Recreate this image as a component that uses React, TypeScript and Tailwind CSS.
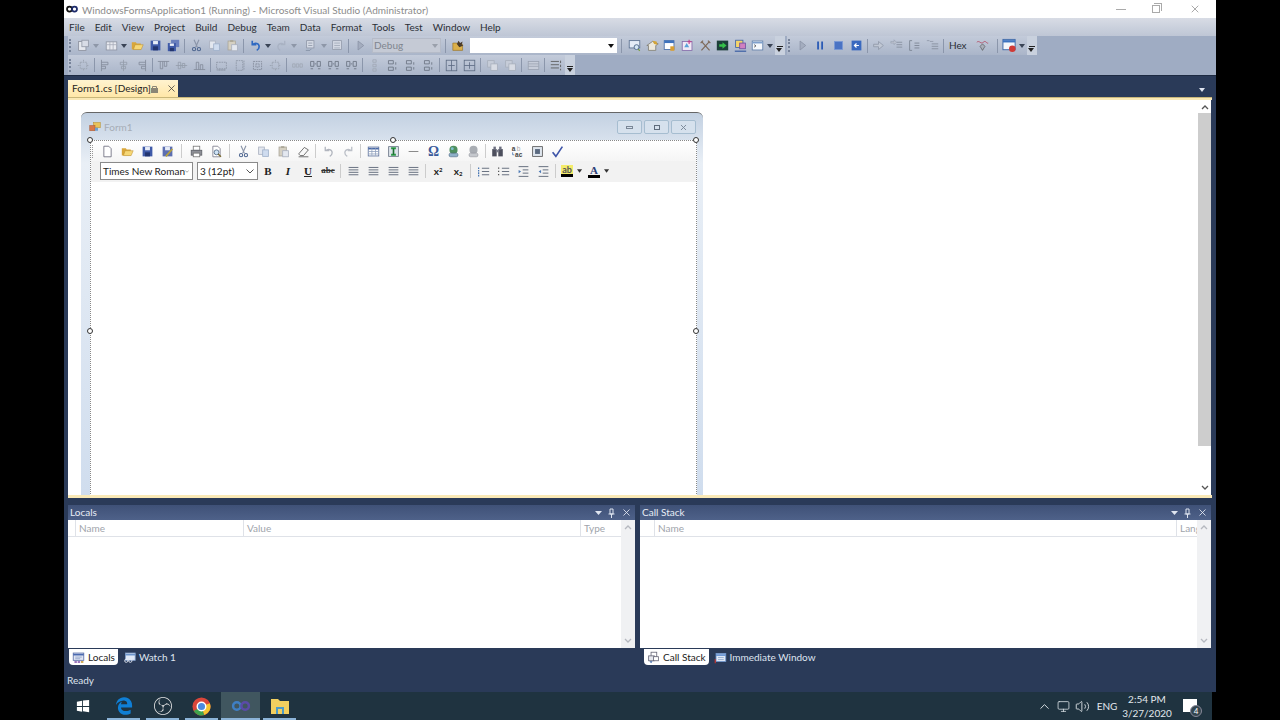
import type { ReactNode } from "react";
import { ChevronUp, Monitor, Volume2, X } from "lucide-react";
import { FaEdgeLegacy } from "react-icons/fa";
import { SiObsstudio } from "react-icons/si";

const lines = (ys: number[], x1: number, x2: number, c = "#4a5568") =>
  ys.map((y) => <path key={y} d={`M${x1} ${y}H${x2}`} stroke={c} />);

const icons: Record<string, ReactNode> = {
  page: <path d="M3.5 1.5h6l3 3v10h-9z" fill="#fff" stroke="#667" />,
  newproj: (
    <>
      <rect x="2" y="3" width="9" height="11" fill="#e6e8ee" stroke="#8a8f9c" />
      <rect x="6" y="1.5" width="8" height="8" fill="#d8dce6" stroke="#9298a6" />
    </>
  ),
  additem: (
    <>
      <rect x="1.5" y="3.5" width="13" height="10" fill="#e8eaf0" stroke="#8d93a1" />
      <path d="M1.5 7h13M6 3.5v10M10 3.5v10" stroke="#a8adba" />
    </>
  ),
  folder: (
    <>
      <path d="M1 13V4h5l1 1.500h5V13z" fill="#d9a63a" />
      <path d="M3 13l2-6h10l-2.500 6z" fill="#f6d776" stroke="#b98a28" strokeWidth=".6" />
    </>
  ),
  folderRun: (
    <>
      <path d="M1 14V5h5l1 1.500h6V14z" fill="#dcb04a" stroke="#8d6a20" strokeWidth=".7" />
      <path d="M8 2l2 3 3-2-1 4 2 1-5 2-3-4z" fill="#4a3b2a" />
    </>
  ),
  save: (
    <>
      <path d="M2 2h12v12H2z" fill="#3f5aa8" />
      <rect x="5" y="2.500" width="6" height="4" fill="#e8edf8" />
      <rect x="5" y="9" width="6" height="5" fill="#23356f" />
    </>
  ),
  saveAll: (
    <>
      <path d="M5 1h10v9H5z" fill="#6a7fbd" />
      <path d="M1 5h10v10H1z" fill="#3f5aa8" />
      <rect x="3.500" y="5.500" width="5" height="3" fill="#e8edf8" />
      <rect x="3.500" y="11" width="5" height="4" fill="#23356f" />
    </>
  ),
  saveEdit: (
    <>
      <path d="M2 2h12v12H2z" fill="#5d6fb1" />
      <rect x="5" y="2.500" width="6" height="4" fill="#e8edf8" />
      <path d="M6 14L14 5" stroke="#b8a33a" strokeWidth="2" />
    </>
  ),
  cut: (
    <>
      <path d="M5 1l4 9M11 1L7 10" stroke="#8a94a8" strokeWidth="1.400" />
      <circle cx="5" cy="12.500" r="2" fill="none" stroke="#4e6690" strokeWidth="1.300" />
      <circle cx="11" cy="12.500" r="2" fill="none" stroke="#4e6690" strokeWidth="1.300" />
    </>
  ),
  copy: (
    <>
      <rect x="2" y="2.500" width="7" height="9" fill="#e3e7ef" stroke="#aab1c0" />
      <rect x="7" y="6" width="7" height="8" fill="#cfdcef" stroke="#9fb0ca" />
    </>
  ),
  paste: (
    <>
      <rect x="2.500" y="2.500" width="9" height="11" fill="#d5d0c2" stroke="#aaa69a" />
      <rect x="7" y="7" width="7" height="7.500" fill="#e4e8f0" stroke="#a9b0bf" />
      <rect x="5" y="1.500" width="4" height="2" fill="#a9a595" />
    </>
  ),
  eraser: <path d="M2 11l7-8 5 3-6 7H4zM2 14.500h12" fill="#fafafa" stroke="#555" />,
  undo: <path d="M4 2v5h5M4.500 7c3-3 8-1.500 8 2.500 0 2-1 3.500-3 4.500" fill="none" stroke="#2f69c2" strokeWidth="2" />,
  redo: <path d="M12 2v5H7M11.500 7c-3-3-8-1.500-8 2.500 0 2 1 3.500 3 4.500" fill="none" stroke="#a9b2c3" strokeWidth="1.600" />,
  undoG: <path d="M4 2v5h5M4.500 7c3-3 8-1.500 8 2.500 0 2-1 3.500-3 4.500" fill="none" stroke="#b2b6bf" strokeWidth="1.600" />,
  redoG: <path d="M12 2v5H7M11.500 7c-3-3-8-1.500-8 2.500 0 2 1 3.500 3 4.500" fill="none" stroke="#bcc0c8" strokeWidth="1.600" />,
  nav: (
    <>
      <rect x="2" y="2" width="9" height="9" fill="#d5dae5" stroke="#8f97a7" />
      <path d="M4 5h5M4 8h5" stroke="#8f97a7" />
      <path d="M1 14h5l2-2" stroke="#7e8b9f" fill="none" />
    </>
  ),
  nav2: (
    <>
      <rect x="2" y="2" width="11" height="11" fill="#d3d8e3" stroke="#939bab" />
      <path d="M4 5h7M4 8h7M4 11h7" stroke="#9fa7b6" />
    </>
  ),
  play: <path d="M5 2.500l7 5.500-7 5.500z" fill="#a4adbf" stroke="#8a93a6" />,
  find: (
    <>
      <rect x="1.500" y="2" width="13" height="9" fill="#e4ecf6" stroke="#556b8c" />
      <circle cx="10.500" cy="10" r="3" fill="#d4e6f4" stroke="#546e8f" strokeWidth="1.200" />
      <path d="M12.500 12.500l2 2" stroke="#7a9e3a" strokeWidth="1.500" />
    </>
  ),
  props: (
    <>
      <path d="M1 8l7-5 7 3-3 2v6H3V8z" fill="#ece8dc" stroke="#7d7a70" />
      <path d="M8 2l5 1 1 4-4-1z" fill="#d3a437" />
    </>
  ),
  win: (
    <>
      <rect x="1.500" y="2" width="12" height="11" fill="#fff" stroke="#3f68a6" />
      <rect x="1.500" y="2" width="12" height="3" fill="#3f73bd" />
      <rect x="9" y="9" width="5" height="5.500" fill="#d99e32" />
    </>
  ),
  win2: (
    <>
      <rect x="1.500" y="3" width="12" height="11" fill="#f1e9f5" stroke="#8368a8" />
      <path d="M4 10l3-5 3 5z" fill="#5aa2d8" />
      <path d="M10 1v5M8 3.500h5" stroke="#c23e8a" strokeWidth="1.300" />
    </>
  ),
  locals: (
    <>
      <rect x="1.500" y="2.500" width="13" height="9" fill="#dfe4f2" stroke="#5a6fa8" />
      <path d="M1.500 4.500h13" stroke="#4a6ab0" strokeWidth="2" />
      <path d="M3 13.500h3M7 13.500h3" stroke="#7b4aa8" strokeWidth="2" />
      <path d="M11 13.500h3" stroke="#c79a35" strokeWidth="2" />
      <path d="M4 7.500h8M4 9.500h6" stroke="#8da0c8" />
    </>
  ),
  watch: (
    <>
      <rect x="3" y="2.500" width="12" height="9" fill="#dfe8f6" stroke="#7f9cc8" />
      <path d="M3 4.500h12" stroke="#6c94cc" strokeWidth="2" />
      <circle cx="4" cy="12" r="2" fill="none" stroke="#e8edf6" />
      <circle cx="9" cy="12" r="2" fill="none" stroke="#e8edf6" />
    </>
  ),
  stackIcon: (
    <>
      <rect x="5" y="1.500" width="7" height="6" fill="#fff" stroke="#667" />
      <rect x="2" y="6" width="7" height="6" fill="#e6e8ee" stroke="#667" />
      <rect x="8" y="7" width="6" height="5" fill="#fff" stroke="#667" />
      <path d="M5 15l2-2.500H3z" fill="#3f68a6" />
    </>
  ),
  immediate: (
    <>
      <rect x="2.500" y="3" width="12" height="10" fill="#dfe8f6" stroke="#6c94cc" />
      <path d="M2.500 5h12" stroke="#5f8ed0" strokeWidth="2" />
      <path d="M5 8h7M5 10.500h7" stroke="#8da8cf" />
      <path d="M1.500 10v5" stroke="#d9342b" strokeWidth="1.300" />
    </>
  ),
  tools: <path d="M3 14L13 3M3 3l10 11M11 2l3 3M2 5l3-3" stroke="#7e6a5a" strokeWidth="1.500" fill="none" />,
  greenArrow: (
    <>
      <rect x="1" y="2" width="14" height="12" fill="#1c3f3a" />
      <path d="M4 6.500h4V4l5 4-5 4V9.500H4z" fill="#35c24a" />
    </>
  ),
  colors: (
    <>
      <rect x="2" y="1.500" width="9" height="9" fill="#f4d46a" stroke="#3a62a8" />
      <rect x="7" y="5" width="7" height="7" fill="#d080c0" stroke="#6d4ea0" />
      <path d="M1 15h14" stroke="#3358a0" strokeWidth="1.400" />
    </>
  ),
  formIcon: (
    <>
      <rect x="6" y="2" width="9" height="7" fill="#e8c25a" stroke="#b89030" strokeWidth=".7" />
      <rect x="1" y="6" width="7" height="7" fill="#d9784a" stroke="#a85a35" strokeWidth=".7" />
      <rect x="8" y="9" width="4" height="4" fill="#6d9ed0" />
    </>
  ),
  console: (
    <>
      <rect x="1.500" y="2.500" width="13" height="11" fill="#f5f8fc" stroke="#5d7da8" />
      <path d="M1.500 4.500h13" stroke="#7fa0cc" strokeWidth="2" />
      <path d="M4 7l2 1.500-2 1.500" stroke="#333" fill="none" />
    </>
  ),
  pause: <path d="M5 3v10M10 3v10" stroke="#2a5ab5" strokeWidth="2.200" />,
  stop: <rect x="3" y="3" width="10" height="10" fill="#4a73c4" stroke="#7b9ad6" />,
  restart: (
    <>
      <rect x="2" y="2" width="12" height="12" fill="#3a69bf" />
      <path d="M11 8H6M8 5.500L5.500 8 8 10.500" stroke="#fff" strokeWidth="1.500" fill="none" />
    </>
  ),
  next: <path d="M2 6.500h6V3l6 5-6 5V9.500H2z" fill="#c0c7d4" stroke="#8f97a7" />,
  stepIn: (
    <>
      <path d="M8 4h7M8 7h7M8 10h7" stroke="#838b9a" />
      <path d="M1 3h4V1l3 3-3 3V5H1z" fill="#bcc3d0" stroke="#8f97a7" strokeWidth=".6" />
    </>
  ),
  stepBr: <path d="M5 2H2v12h3M8 5h6M8 8h6M8 11h6" stroke="#78808f" fill="none" />,
  stepOut: (
    <>
      <path d="M7 6h8M7 9h8M7 12h8" stroke="#838b9a" />
      <path d="M1 2h3l1 1H9" stroke="#8f97a7" fill="none" />
    </>
  ),
  thread: (
    <>
      <path d="M1 4c3-3 5 3 8 0s4 2 6 1" stroke="#b3425c" fill="none" />
      <path d="M5 9l3-3 3 3-3 5z" fill="#a9afba" stroke="#444" strokeWidth=".7" />
    </>
  ),
  breakW: (
    <>
      <rect x="1" y="1.500" width="13" height="11" fill="#f4f7fb" stroke="#3d68a8" />
      <path d="M1 3.500h13" stroke="#3d73c0" strokeWidth="2.500" />
      <circle cx="11" cy="11.500" r="3.500" fill="#d03a36" />
    </>
  ),
  alignL: <path d="M3 1v14M3 4h8v3H3M3 9h5v3H3" stroke="#828a9a" fill="none" />,
  alignC: <path d="M8 1v14M4 4h8v3H4zM5.500 9h5v3h-5z" stroke="#949caa" fill="none" />,
  alignR: <path d="M13 1v14M13 4H5v3h8M13 9H8v3h5" stroke="#828a9a" fill="none" />,
  alignT: <path d="M1 3h14M4 3v9h3V3M9 3v6h3V3" stroke="#828a9a" fill="none" />,
  alignM: <path d="M1 8h14M4 4h3v8H4zM9 5.500h3v5H9z" stroke="#949caa" fill="none" />,
  alignB: <path d="M1 13h14M4 13V4h3v9M9 13V7h3v6" stroke="#828a9a" fill="none" />,
  sizeW: <path d="M2 4h12v8H2zM2 13.500h12M4 13.500h8" stroke="#8a92a2" strokeDasharray="2 1" fill="none" />,
  sizeH: <path d="M4 2h8v12H4zM13.500 2v12" stroke="#8a92a2" strokeDasharray="2 1" fill="none" />,
  sizeB: <path d="M3 3h10v10H3zM6 6h4v4H6z" stroke="#808898" strokeDasharray="2 1" fill="none" />,
  grid: <path d="M4 4h8v8H4zM1 8h3M12 8h3M8 1v3M8 12v3" stroke="#98a0ae" strokeDasharray="2 1" fill="none" />,
  hsp1: <path d="M2 6h3v4H2zM6.500 6h3v4h-3zM11 6h3v4h-3z" stroke="#a0a8b5" fill="none" />,
  hsp2: <path d="M2 3h4v6H2zM10 3h4v6h-4zM2 12h3M11 12h3M7 6h2" stroke="#68707f" fill="none" />,
  vsp1: <path d="M6 1h4v3H6zM6 6.500h4v3H6zM6 12h4v3H6z" stroke="#a0a8b5" fill="none" />,
  vsp2: <path d="M3 2h6v4H3zM3 10h6v4H3zM12 4v3M12 10v3" stroke="#68707f" fill="none" />,
  centerH: (
    <>
      <rect x="1.500" y="1.500" width="13" height="13" fill="none" stroke="#5c6a82" />
      <path d="M8 1.500v13M4 8h8" stroke="#5c6a82" />
    </>
  ),
  centerV: (
    <>
      <rect x="1.500" y="1.500" width="13" height="13" fill="none" stroke="#5c6a82" />
      <path d="M1.500 8h13M8 4v8" stroke="#5c6a82" />
    </>
  ),
  front: (
    <>
      <rect x="2" y="2" width="8" height="8" fill="#c6ccd8" stroke="#a7afbc" />
      <rect x="6" y="6" width="8" height="8" fill="#d8dce4" stroke="#a7afbc" />
    </>
  ),
  tabOrder: (
    <>
      <rect x="1.500" y="3" width="13" height="10" fill="#c7cdd9" stroke="#9aa2b1" />
      <path d="M1.500 6h13M1.500 9h13" stroke="#9aa2b1" />
    </>
  ),
  layout: (
    <>
      {lines([3, 7, 11], 1, 11, "#555")}
      <path d="M13 2v3M13 7v3M13 12v2" stroke="#555" />
    </>
  ),
  print: (
    <>
      <rect x="4" y="1.500" width="8" height="5" fill="#fff" stroke="#777" />
      <rect x="1.500" y="6.500" width="13" height="6" fill="#8e9097" stroke="#5d5f66" />
      <rect x="4" y="10" width="8" height="4.500" fill="#fff" stroke="#777" />
    </>
  ),
  preview: (
    <>
      <path d="M3.500 1.500h6l3 3v10h-9z" fill="#fff" stroke="#778" />
      <circle cx="8" cy="9" r="3" fill="#cfe3f5" stroke="#47617f" />
      <path d="M10 11l3.500 3.500" stroke="#7c6a2e" strokeWidth="1.600" />
    </>
  ),
  table: (
    <>
      <rect x="1.500" y="2.500" width="13" height="11" fill="#fff" stroke="#5a6f9a" />
      <path d="M1.500 4.500h13" stroke="#4a6aa8" strokeWidth="2" />
      <path d="M1.500 8h13M1.500 11h13M6 4v9M10.500 4v9" stroke="#93a2bf" />
    </>
  ),
  imgGreen: (
    <>
      <rect x="2" y="2" width="12" height="12" fill="#dce3ea" stroke="#6b7686" />
      <path d="M5 4h6M5 12h6" stroke="#2f9e4a" strokeWidth="2.500" />
      <path d="M8 4v8" stroke="#1d6f33" strokeWidth="2" />
    </>
  ),
  hr: <path d="M2 8h12" stroke="#8b8b8b" strokeWidth="1.300" />,
  omega: (
    <text x="8" y="14" textAnchor="middle" fontSize="17" fontWeight="700" fill="#3a5a9a" fontFamily="Liberation Serif">
      Ω
    </text>
  ),
  replace: (
    <>
      <text x="1" y="7" fontSize="8" fontWeight="700" fill="#444" fontFamily="Liberation Sans">a</text>
      <text x="7" y="7" fontSize="8" fill="#aaa" fontFamily="Liberation Sans">b</text>
      <text x="5" y="15" fontSize="8" fontWeight="700" fill="#444" fontFamily="Liberation Sans">ac</text>
      <path d="M2 9v3h2" stroke="#4a78b5" fill="none" />
    </>
  ),
  globe: (
    <>
      <circle cx="8" cy="6" r="5" fill="#4f8f5e" />
      <circle cx="6.500" cy="4.500" r="1.800" fill="#7ebfd0" />
      <rect x="2.500" y="10" width="11" height="4.500" rx="2" fill="#8fb0c8" stroke="#46627e" strokeWidth=".7" />
    </>
  ),
  globeG: (
    <>
      <circle cx="8" cy="6" r="5" fill="#a9adb3" />
      <rect x="2.500" y="10" width="11" height="4.500" rx="2" fill="#c5c8cd" stroke="#8f9298" strokeWidth=".7" />
    </>
  ),
  binoc: (
    <>
      <rect x="1.500" y="5" width="5.500" height="9" fill="#4d4f5d" />
      <rect x="9" y="5" width="5.500" height="9" fill="#4d4f5d" />
      <rect x="3" y="2" width="3" height="4" fill="#6c6f80" />
      <rect x="10" y="2" width="3" height="4" fill="#6c6f80" />
      <rect x="6" y="6" width="4" height="3" fill="#7a7c8a" />
    </>
  ),
  frame: (
    <>
      <rect x="2" y="2" width="12" height="12" fill="#dfe6ee" stroke="#555" />
      <rect x="5" y="5" width="6" height="6" fill="#5b6a80" />
    </>
  ),
  spell: <path d="M2 9l4 5 8-12" stroke="#3e54a8" strokeWidth="2" fill="none" />,
  alL: <>{lines([3, 6, 9, 12], 2, 14)}</>,
  alOut: (
    <>
      {lines([4, 8, 12], 6, 15)}
      <path d="M2 3v11" stroke="#4a78b5" strokeWidth="1.500" strokeDasharray="2 1" />
    </>
  ),
  alBul: (
    <>
      {lines([4, 8, 12], 6, 15)}
      <path d="M2 3v1.500M2 7v1.500M2 11v1.500" stroke="#555" strokeWidth="1.500" />
    </>
  ),
  indent: (
    <>
      {lines([2, 14], 2, 14)}
      {lines([6, 10], 7, 14)}
      <path d="M2 6l3 2-3 2z" fill="#4a78b5" />
    </>
  ),
  outdent: (
    <>
      {lines([2, 14], 2, 14)}
      {lines([6, 10], 7, 14)}
      <path d="M5 6L2 8l3 2z" fill="#4a78b5" />
    </>
  ),
  win10: <path d="M1 3l6-1v6H1zM8 1.800L15 1v7H8zM1 9h6v5.500l-6-1zM8 9h7v6l-7-.9z" fill="#fff" />,
};

function Icon({ name, size = 14 }: { name: string; size?: number }) {
  return (
    <svg width={size} height={size} viewBox="0 0 16 16">
      {icons[name]}
    </svg>
  );
}

const Caret = ({ color = "#3a4456" }: { color?: string }) => (
  <svg width="7" height="4" viewBox="0 0 7 4">
    <path d="M0 0h6L3 4z" fill={color} />
  </svg>
);

function Grip() {
  return <div className="w-[5px] h-[13px] ml-[1px] border-l-2 border-dotted border-[#77839a]" />;
}

function Sep({ w = 5, color = "bg-[#8b96ab]" }: { w?: number; color?: string }) {
  return (
    <div className="flex justify-center shrink-0" style={{ width: w }}>
      <div className={`w-px h-[14px] ${color}`} />
    </div>
  );
}

// a toolbar item: icon name, "|" separator (with optional width), "v" dropdown arrow
function Items({ list, cell, size, sepColor }: { list: string[]; cell: number; size: number; sepColor?: string }) {
  return (
    <>
      {list.map((it, i) => {
        if (it.startsWith("|")) return <Sep key={i} w={Number(it.slice(1) || 5)} color={sepColor} />;
        if (it === "v")
          return (
            <div key={i} className="w-[8px] flex justify-center shrink-0">
              <Caret />
            </div>
          );
        if (it === "vg")
          return (
            <div key={i} className="w-[8px] flex justify-center shrink-0">
              <Caret color="#8e97a8" />
            </div>
          );
        if (it.startsWith("_"))
          return <div key={i} className="shrink-0" style={{ width: Number(it.slice(1)) }} />;
        return (
          <div key={i} className="flex justify-center shrink-0" style={{ width: cell }}>
            <Icon name={it} size={size} />
          </div>
        );
      })}
    </>
  );
}

function Overflow() {
  return (
    <div className="w-[10px] h-full bg-[#c9d1de] flex flex-col items-center justify-end pb-[3px] shrink-0">
      <div className="w-[6px] h-px bg-[#222] mb-px" />
      <Caret color="#222" />
    </div>
  );
}

function Strip({ children }: { children: ReactNode }) {
  return (
    <div className="h-full flex items-center bg-gradient-to-b from-[#c3cbda] to-[#aab5c9] shrink-0">
      {children}
    </div>
  );
}

const menu = ["File", "Edit", "View", "Project", "Build", "Debug", "Team", "Data", "Format", "Tools", "Test", "Window", "Help"];

function Column({ label, w }: { label: string; w?: number }) {
  return (
    <div
      className={`h-full border-l border-[#dfe2e8] pl-[3px] pt-px flex items-center text-[10px] text-[#a0a4ab] overflow-hidden ${w ? "shrink-0" : "flex-1"}`}
      style={w ? { width: w } : undefined}
    >
      {label}
    </div>
  );
}

function SideScroll() {
  return (
    <div className="w-[14px] h-full bg-[#f0f1f3] flex flex-col items-center justify-between text-[#b5b8bf] py-[5px] shrink-0">
      <svg width="8" height="5" viewBox="0 0 8 5"><path d="M1 4l3-3 3 3" fill="none" stroke="currentColor" strokeWidth="1.300" /></svg>
      <svg width="8" height="5" viewBox="0 0 8 5"><path d="M1 1l3 3 3-3" fill="none" stroke="currentColor" strokeWidth="1.300" /></svg>
    </div>
  );
}

function PanelHead({ title }: { title: string }) {
  return (
    <div className="h-[15px] flex items-center bg-gradient-to-b from-[#3f5177] to-[#4e6189] px-[2px] text-[10px] text-[#e8edf6]">
      <span className="flex-1">{title}</span>
      <svg width="7" height="4" viewBox="0 0 7 4" className="mr-[6px]"><path d="M0 0h7L3.500 4z" fill="#dfe5f0" /></svg>
      <svg width="7" height="10" viewBox="0 0 7 10" className="mr-[6px]"><path d="M2 1h3v5H2zM0.500 6h6M3.500 6v4" stroke="#dfe5f0" fill="none" /></svg>
      <X size={11} color="#e8edf6" strokeWidth={1.8} className="mr-px" />
    </div>
  );
}

function Handle({ className }: { className: string }) {
  return <div className={`absolute w-[6px] h-[6px] rounded-full bg-white border border-[#333] ${className}`} />;
}

function FormToolbars() {
  return (
    <>
      <div className="h-[20px] flex items-center bg-gradient-to-b from-white to-[#f5f5f5] pl-[1px]">
        <div className="w-[5px] h-[13px] border-l border-dotted border-[#999]" />
        <Items
          size={13}
          cell={20}
          sepColor="bg-[#ccc]"
          list={["page", "folder", "save", "saveEdit", "|9", "print", "preview", "|7", "cut", "copy", "paste", "eraser", "|5", "undoG", "redoG", "|5", "table", "imgGreen", "hr", "omega", "globe", "globeG", "|4", "binoc", "replace", "frame", "spell"]}
        />
      </div>
      <div className="h-[21px] flex items-center bg-[#f2f2f2] pl-[9px] pb-px">
        <div className="w-[93px] h-[18px] border border-[#8a8a8a] bg-white flex items-center justify-between pl-[2px] pr-[3px] text-[10px] text-[#222] shrink-0">
          <span className="whitespace-nowrap">Times New Roman</span>
          <svg width="8" height="5" viewBox="0 0 8 5"><path d="M.500 .500l3.500 3.500 3.500-3.500" fill="none" stroke="#555" /></svg>
        </div>
        <div className="ml-[4px] w-[61px] h-[18px] border border-[#8a8a8a] bg-white flex items-center justify-between pl-[2px] pr-[3px] text-[10px] text-[#222] shrink-0">
          <span>3 (12pt)</span>
          <svg width="8" height="5" viewBox="0 0 8 5"><path d="M.500 .500l3.500 3.500 3.500-3.500" fill="none" stroke="#555" /></svg>
        </div>
        {["B", "I", "U"].map((c) => (
          <div
            key={c}
            className={`w-[20px] text-center text-[11px] text-[#222] shrink-0 [font-family:'Liberation_Serif',serif] font-bold ${c === "I" ? "italic" : ""} ${c === "U" ? "underline" : ""}`}
          >
            {c}
          </div>
        ))}
        <div className="w-[20px] text-center text-[9px] font-bold text-[#333] line-through shrink-0 [font-family:'Liberation_Serif',serif]">abc</div>
        <Sep w={5} color="bg-[#ccc]" />
        <Items size={13} cell={20} list={["alL", "alL", "alL", "alL"]} />
        <Sep w={5} color="bg-[#ccc]" />
        <div className="w-[20px] text-center text-[10px] font-bold text-[#222] shrink-0">x<sup className="text-[6px]">2</sup></div>
        <div className="w-[20px] text-center text-[10px] font-bold text-[#222] shrink-0">x<sub className="text-[6px]">2</sub></div>
        <Sep w={5} color="bg-[#ccc]" />
        <Items size={13} cell={20} list={["alOut", "alBul", "indent", "outdent"]} />
        <Sep w={4} color="bg-[#ccc]" />
        <div className="w-[20px] text-center flex flex-col items-center shrink-0">
          <span className="text-[9px] leading-[9px] font-bold text-[#555] bg-[#f4ec6a] px-px">ab</span>
          <div className="w-[12px] h-[3px] bg-black" />
        </div>
        <div className="w-[6px] flex justify-center"><Caret color="#333" /></div>
        <div className="w-[1px]" />
        <div className="w-[20px] flex flex-col items-center shrink-0">
          <span className="text-[11px] leading-[10px] font-bold text-[#2c3e78] [font-family:'Liberation_Serif',serif]">A</span>
          <div className="w-[12px] h-[3px] bg-black" />
        </div>
        <div className="w-[6px] flex justify-center"><Caret color="#333" /></div>
      </div>
    </>
  );
}

function BottomTab({ label, active, icon }: { label: string; active?: boolean; icon: string }) {
  return (
    <div className={`h-[16px] flex items-center gap-[2px] px-[3px] text-[10px] rounded-b-sm ${active ? "bg-white text-[#222]" : "text-[#dfe5f0]"}`}>
      <Icon name={icon} size={13} />
      <span className="ml-px whitespace-nowrap">{label}</span>
    </div>
  );
}

function TaskIcon({ on, active, children }: { on?: boolean; active?: boolean; children: ReactNode }) {
  return (
    <div className={`relative w-[39px] h-full flex items-center justify-center shrink-0 ${active ? "bg-[#40565f]" : ""}`}>
      {children}
      {on && <div className={`absolute bottom-0 h-[2px] bg-[#8cb4d8] ${active ? "inset-x-0" : "inset-x-[3px]"}`} />}
    </div>
  );
}

export default function App() {
  return (
    <div className="w-[1280px] h-[720px] bg-black flex justify-center overflow-hidden [font-family:'Lato','Noto_Sans',sans-serif]">
      <div className="w-[1152px] h-full flex flex-col">
        {/* title bar */}
        <div className="h-[18px] bg-white flex items-center pl-[2px] shrink-0">
          <svg width="12" height="8" viewBox="0 0 24 14" className="mr-[4px]">
            <circle cx="7" cy="7" r="5" fill="none" stroke="#111" strokeWidth="3.500" />
            <circle cx="17" cy="7" r="5" fill="none" stroke="#1d2b6b" strokeWidth="3.500" />
          </svg>
          <span className="text-[10px] text-[#8c8c8c] flex-1 whitespace-nowrap pt-[2px]">
            WindowsFormsApplication1 (Running) - Microsoft Visual Studio (Administrator)
          </span>
          <div className="w-[10px] h-px bg-[#aaa] mr-[26px]" />
          <div className="relative w-[8px] h-[8px] border border-[#aaa] mr-[29px]">
            <div className="absolute -top-[3px] -right-[3px] w-[8px] h-[8px] border-t border-r border-[#aaa]" />
          </div>
          <X size={12} color="#aaa" className="mr-[15px]" />
        </div>

        {/* menu */}
        <div className="h-[18px] bg-gradient-to-b from-[#d8dce5] to-[#bec6d5] flex items-center pl-[5px] shrink-0 text-[10px] text-[#2b2f36]">
          {menu.map((m) => (
            <span key={m} className="pr-[10px]">{m}</span>
          ))}
        </div>

        {/* toolbars */}
        <div className="h-[19px] bg-[#9facc3] flex items-center shrink-0 pl-[4px]">
          <Strip>
            <Grip />
            <Items
              size={13}
              cell={18}
              list={["newproj", "vg", "_2", "additem", "v", "folder", "save", "saveAll", "|5", "cut", "copy", "paste", "|5", "undo", "v", "redo", "vg", "_4", "nav", "vg", "nav2", "|5", "play"]}
            />
            <div className="ml-[3px] w-[69px] h-[15px] bg-[#c5cad5] border border-[#b5bbc8] flex items-center justify-between px-[1px] text-[10px] text-[#80858f]">
              <span>Debug</span>
              <Caret color="#9aa0ab" />
            </div>
            <Sep w={8} />
            <Items size={13} cell={18} list={["folderRun"]} />
            <div className="ml-[3px] w-[147px] h-[15px] bg-white flex items-center justify-end pr-[2px]">
              <Caret color="#111" />
            </div>
            <Sep w={9} />
            <Items
              size={13}
              cell={17.6}
              list={["find", "props", "win", "win2", "tools", "greenArrow", "colors", "console", "v"]}
            />
            <Overflow />
          </Strip>
          <div className="w-[2px]" />
          <Strip>
            <Grip />
            <div className="w-[1px]" />
            <Items size={13} cell={18} list={["play", "pause", "stop", "restart", "|4", "next", "stepIn", "stepBr", "stepOut", "|4"]} />
            <span className="w-[24px] text-center text-[10px] text-[#2b2f36]">Hex</span>
            <Items size={13} cell={25} list={["thread"]} />
            <Sep w={5} />
            <Items size={15} cell={19} list={["breakW", "v"]} />
            <Overflow />
          </Strip>
        </div>
        <div className="h-[20px] bg-[#9facc3] flex items-center shrink-0 pl-[4px]">
          <Strip>
            <Grip />
            <Items
              size={13}
              cell={18}
              list={["grid", "|4", "alignL", "alignC", "alignR", "|4", "alignT", "alignM", "alignB", "|4", "sizeW", "sizeH", "sizeB", "grid", "|4", "hsp1", "hsp2", "hsp2", "hsp2", "|5", "vsp1", "vsp2", "vsp2", "vsp2", "|5", "centerH", "centerV", "|5", "front", "front", "|5", "tabOrder", "|5", "layout"]}
            />
            <Overflow />
          </Strip>
        </div>

        {/* dark workspace */}
        <div className="flex-1 min-h-0 bg-[#2a3a58] flex flex-col px-[4px] border-t border-[#1d2a42]">
          <div className="h-[21px] flex items-end shrink-0">
            <div className="w-[110px] h-[17px] bg-gradient-to-b from-[#fff3cf] to-[#ffe7a8] flex items-center pl-[4px] text-[10px] text-[#222]">
              <span className="whitespace-nowrap w-[79px]">Form1.cs [Design]</span>
              <svg width="7" height="8" viewBox="0 0 7 8" className="mr-[8px] shrink-0"><rect y="3" width="7" height="5" fill="#8a8676" /><path d="M1.500 3V1.500h4V3" stroke="#8a8676" fill="none" /></svg>
              <X size={11} color="#333" strokeWidth={1.6} className="shrink-0" />
            </div>
            <div className="flex-1 flex justify-end pr-[6px] pb-[5px]">
              <Caret color="#dfe5f0" />
            </div>
          </div>
          <div className="h-[3px] bg-[#fae9b6] shrink-0 border-t border-[#c9b77a]" />

          {/* document */}
          <div className="h-[395px] mr-px bg-white flex shrink-0 overflow-hidden">
            <div className="flex-1 min-w-0 pl-[13px] pt-[12px]">
              <div className="w-[622px] h-[420px] rounded-t-md border-t border-[#666] bg-gradient-to-b from-[#c3d1e2] via-[#e9eff6] via-[12%] to-[#cddbed]">
                <div className="h-[27px] flex items-center pl-[8px] pr-[7px] pt-px text-[10px] text-[#a7adb6]">
                  <Icon name="formIcon" size={12} />
                  <span className="ml-[3px] flex-1">Form1</span>
                  <div className="h-[14px] flex gap-[2px]">
                    {["min", "max", "close"].map((b) => (
                      <div key={b} className="w-[25px] h-[14px] shrink-0 border border-[#a6bdd0] rounded-[2px] flex items-center justify-center bg-[#d6e1ed]">
                        {b === "min" && <div className="w-[7px] h-[3px] border border-[#7a8797]" />}
                        {b === "max" && <div className="w-[6px] h-[5px] border border-[#5f6c7c]" />}
                        {b === "close" && <X size={9} color="#7a8797" strokeWidth={2.5} />}
                      </div>
                    ))}
                  </div>
                </div>
                <div className="ml-[9px] mr-[6px] relative h-[382px] bg-white border border-dotted border-[#888]">
                  <FormToolbars />
                  <Handle className="-left-[4px] -top-[4px]" />
                  <Handle className="left-[299px] -top-[4px]" />
                  <Handle className="-right-[3px] -top-[4px]" />
                  <Handle className="-left-[4px] top-[187px]" />
                  <Handle className="-right-[3px] top-[187px]" />
                </div>
              </div>
            </div>
            <div className="w-[13px] h-full flex flex-col items-center py-[3px] bg-white shrink-0">
              <svg width="8" height="5" viewBox="0 0 8 5" className="mt-[2px]"><path d="M1 4l3-3 3 3" fill="none" stroke="#555" strokeWidth="1.300" /></svg>
              <div className="w-full h-[333px] mt-[3px] bg-[#cdcdcd]" />
              <div className="flex-1" />
              <svg width="8" height="5" viewBox="0 0 8 5" className="mb-[2px]"><path d="M1 1l3 3 3-3" fill="none" stroke="#555" strokeWidth="1.300" /></svg>
            </div>
          </div>
          <div className="h-[3px] bg-[#fae9b6] shrink-0" />

          {/* debug panels */}
          <div className="mt-[7px] flex gap-[5px] shrink-0">
            <div className="w-[567px]">
              <PanelHead title="Locals" />
              <div className="h-[128px] bg-white flex">
                <div className="flex-1 min-w-0">
                  <div className="h-[17px] flex border-b border-[#dfe2e8] pl-[7px]">
                    <Column label="Name" w={168} />
                    <Column label="Value" w={337} />
                    <Column label="Type" />
                  </div>
                </div>
                <SideScroll />
              </div>
              <div className="h-[17px] flex items-start pl-[1px] gap-[2px] pt-px">
                <BottomTab label="Locals" icon="locals" active />
                <BottomTab label="Watch 1" icon="watch" />
              </div>
            </div>
            <div className="w-[571px]">
              <PanelHead title="Call Stack" />
              <div className="h-[128px] bg-white flex">
                <div className="flex-1 min-w-0">
                  <div className="h-[17px] flex border-b border-[#dfe2e8] pl-[14px]">
                    <Column label="Name" w={522} />
                    <Column label="Lang" />
                  </div>
                </div>
                <SideScroll />
              </div>
              <div className="h-[17px] flex items-start pl-[4px] gap-[2px] pt-px">
                <BottomTab label="Call Stack" icon="stackIcon" active />
                <BottomTab label="Immediate Window" icon="immediate" />
              </div>
            </div>
          </div>

          {/* status */}
          <div className="flex-1 flex items-end pb-[4px] text-[10px] text-[#dde3ee] -ml-px">Ready</div>
        </div>

        {/* taskbar */}
        <div className="h-[28px] bg-[#1f3340] flex items-center shrink-0 mr-[4px] text-[#e2e8ec]">
          <div className="w-[40px] flex justify-center shrink-0 -ml-px">
            <Icon name="win10" size={14} />
          </div>
          <div className="w-[1px]" />
          <TaskIcon on>
            <FaEdgeLegacy size={18} color="#0f7fd6" />
          </TaskIcon>
          <TaskIcon on>
            <SiObsstudio size={18} color="#e6e6e6" />
          </TaskIcon>
          <TaskIcon on>
            <svg width="19" height="19" viewBox="0 0 20 20">
              <circle cx="10" cy="10" r="9.500" fill="#d9463a" />
              <path d="M10 10L1.800 14.800A9.500 9.500 0 0 0 13 19z" fill="#3fa34d" />
              <path d="M10 10l3 9A9.500 9.500 0 0 0 18.800 6.500z" fill="#f4c430" />
              <circle cx="10" cy="10" r="4.500" fill="#4a8ae0" stroke="#fff" strokeWidth="1.500" />
            </svg>
          </TaskIcon>
          <TaskIcon on active>
            <svg width="20" height="12" viewBox="0 0 24 14">
              <circle cx="7" cy="7" r="4.500" fill="none" stroke="#3f7fc4" strokeWidth="3" />
              <circle cx="17" cy="7" r="4.500" fill="none" stroke="#5a4ba8" strokeWidth="3" />
            </svg>
          </TaskIcon>
          <TaskIcon on>
            <svg width="18" height="16" viewBox="0 0 18 16">
              <path d="M0 1h7l2 2h9v13H0z" fill="#f2cf5f" />
              <rect x="5" y="9" width="8" height="7" fill="#4c9bc8" />
              <rect x="7" y="11" width="4" height="5" fill="#f2cf5f" />
            </svg>
          </TaskIcon>
          <div className="flex-1" />
          <ChevronUp size={15} strokeWidth={1.5} className="mr-[5px]" />
          <Monitor size={13} strokeWidth={1.4} className="mr-[5px]" />
          <Volume2 size={15} strokeWidth={1.4} className="mr-[4px]" />
          <span className="text-[10px] w-[26px] mr-[4px] text-center">ENG</span>
          <div className="w-[46px] flex flex-col items-center text-[10px] leading-[14px] mr-[13px]">
            <span>2:54 PM</span>
            <span>3/27/2020</span>
          </div>
          <div className="relative w-[14px] h-[13px] bg-white mr-[15px] -mt-px">
            <div className="absolute -right-[5px] -bottom-[5px] w-[12px] h-[12px] rounded-full bg-[#33454f] border border-[#889] text-[8px] leading-[10px] text-center text-white">4</div>
          </div>
        </div>
      </div>
    </div>
  );
}
